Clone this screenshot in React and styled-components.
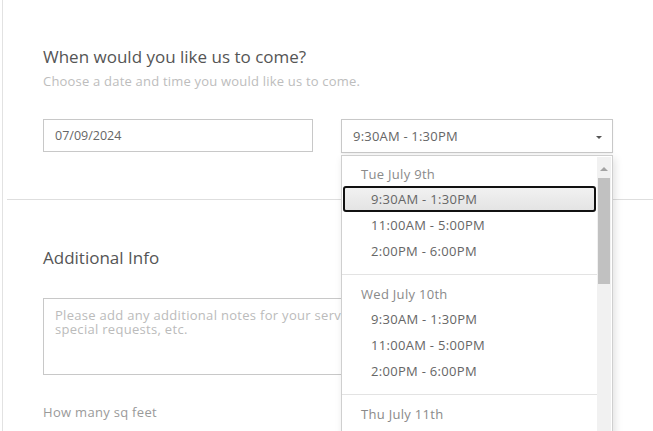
import React from 'react';
import styled, { createGlobalStyle } from 'styled-components';

const GlobalStyle = createGlobalStyle`
  html, body { margin: 0; padding: 0; background: #fff; }
  body {
    font-family: "Open Sans", "Liberation Sans", sans-serif;
    overflow: hidden;
  }
`;

const Page = styled.div`
  margin-left: 2px;
  border-left: 1px solid #e2e2e2;
  min-height: 100vh;
`;

const Section = styled.section`
  padding: ${p => p.pad};
  border-bottom: ${p => (p.divider ? '1px solid #dedede' : 'none')};
  margin-left: ${p => (p.divider ? '4px' : '0')};
`;

const Heading = styled.h2`
  margin: 0;
  font-size: 17px;
  font-weight: 400;
  line-height: 22px;
  color: #555;
`;

const Sub = styled.p`
  margin: 5px 0 0;
  font-size: 13px;
  letter-spacing: 0.2px;
  line-height: 17px;
  color: #bdbdbd;
`;

const FieldRow = styled.div`
  display: grid;
  grid-template-columns: 270px 272px;
  column-gap: 28px;
  margin-top: 29px;
`;

const TextInput = styled.div`
  box-sizing: border-box;
  height: 33px;
  border: 1px solid #c8c8c8;
  display: flex;
  align-items: center;
  padding-left: 11px;
  font-size: 12.5px;
  color: #666;
`;

const SelectWrap = styled.div`
  position: relative;
`;

const SelectBox = styled(TextInput)`
  height: 34px;
  justify-content: space-between;
  padding-right: 10px;
  font-size: 13px;
  letter-spacing: 0.2px;
  box-shadow: 0 1px 2px rgba(0, 0, 0, 0.06);
`;

const Caret = styled.span`
  width: 0;
  height: 0;
  border-left: 3px solid transparent;
  border-right: 3px solid transparent;
  border-top: 3px solid #555;
  margin-top: 2px;
`;

const Dropdown = styled.div`
  position: absolute;
  top: 36px;
  left: 0;
  width: 272px;
  height: 300px;
  display: flex;
  background: #fff;
  border: 1px solid #cfcfcf;
  box-sizing: border-box;
  box-shadow: 2px 3px 8px rgba(0, 0, 0, 0.12);
  z-index: 5;
  overflow: hidden;
`;

const List = styled.div`
  flex: 1;
  padding-top: 7px;
`;

const Group = styled.div`
  border-bottom: 1px solid #e3e3e3;
  padding-bottom: 10px;
  margin-bottom: 8px;
`;

const GroupLabel = styled.div`
  padding-left: 19px;
  font-size: 13px;
  letter-spacing: 0.3px;
  line-height: 22px;
  color: #8a8a8a;
  margin-bottom: 1px;
`;

const Option = styled.div`
  margin: 0 1px;
  height: 26px;
  box-sizing: border-box;
  padding-left: 26px;
  display: flex;
  align-items: center;
  font-size: 13px;
  letter-spacing: 0.3px;
  color: #666;
  border: 2px solid ${p => (p.active ? '#111' : 'transparent')};
  border-radius: 3px;
  background: ${p => (p.active ? 'linear-gradient(#f1f1f1, #e4e4e4)' : 'transparent')};
`;

const Track = styled.div`
  width: 14px;
  margin: 1px 1px 0 0;
  background: #f1f1f1;
  display: flex;
  flex-direction: column;
  align-items: center;
  padding: 10px 0 8px;
  box-sizing: border-box;
`;

const Thumb = styled.div`
  width: 12px;
  height: 106px;
  margin-top: 7px;
  background: #c1c1c1;
`;

const Spacer = styled.div`
  flex: 1;
`;

const ArrowBtn = styled.span`
  width: 0;
  height: 0;
  border-left: 4px solid transparent;
  border-right: 4px solid transparent;
  ${p => (p.down ? 'border-top: 4px solid #505050;' : 'border-bottom: 4px solid #a3a3a3;')}
`;

const Notes = styled.div`
  margin-top: 29px;
  width: 569px;
  height: 77px;
  box-sizing: border-box;
  border: 1px solid #c8c8c8;
  padding: 9px 11px;
  font-size: 13px;
  letter-spacing: 0.3px;
  line-height: 14px;
  color: #bbb;
  overflow: hidden;
`;

const NoteLine = styled.div`
  white-space: nowrap;
`;

const Label = styled.div`
  margin-top: 28px;
  font-size: 13px;
  letter-spacing: 0.3px;
  color: #9a9a9a;
`;

const days = [
  { label: 'Tue July 9th', slots: ['9:30AM - 1:30PM', '11:00AM - 5:00PM', '2:00PM - 6:00PM'] },
  { label: 'Wed July 10th', slots: ['9:30AM - 1:30PM', '11:00AM - 5:00PM', '2:00PM - 6:00PM'] },
  { label: 'Thu July 11th', slots: ['9:30AM - 1:30PM', '11:00AM - 5:00PM', '2:00PM - 6:00PM'] },
];

export default function App() {
  return (
    <>
      <GlobalStyle />
      <Page>
        <Section divider pad="46px 0 46px 36px">
          <Heading>When would you like us to come?</Heading>
          <Sub>Choose a date and time you would like us to come.</Sub>
          <FieldRow>
            <TextInput>07/09/2024</TextInput>
            <SelectWrap>
              <SelectBox>
                9:30AM - 1:30PM
                <Caret />
              </SelectBox>
              <Dropdown>
                <List>
                  {days.map((d, i) => (
                    <Group key={d.label}>
                      <GroupLabel>{d.label}</GroupLabel>
                      {d.slots.map((s, j) => (
                        <Option key={s} active={i === 0 && j === 0}>{s}</Option>
                      ))}
                    </Group>
                  ))}
                </List>
                <Track>
                  <ArrowBtn />
                  <Thumb />
                  <Spacer />
                  <ArrowBtn down />
                </Track>
              </Dropdown>
            </SelectWrap>
          </FieldRow>
        </Section>
        <Section pad="47px 0 0 40px">
          <Heading>Additional Info</Heading>
          <Notes>
            <NoteLine>Please add any additional notes for your service such as access instructions, pets,</NoteLine>
            <NoteLine>special requests, etc.</NoteLine>
          </Notes>
          <Label>How many sq feet</Label>
        </Section>
      </Page>
    </>
  );
}
